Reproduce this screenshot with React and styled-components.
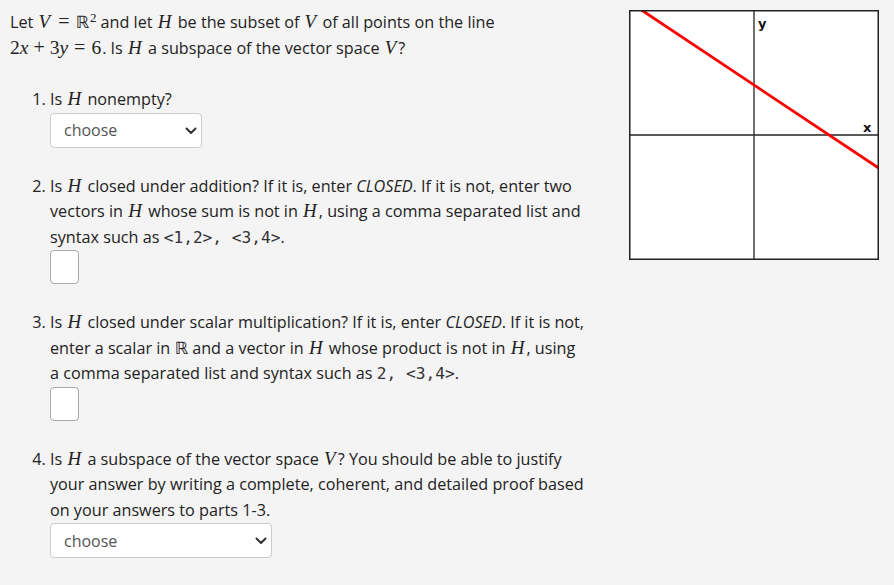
import React from "react";
import styled, { createGlobalStyle } from "styled-components";

const Global = createGlobalStyle`
  html, body { margin: 0; padding: 0; background: #f4f4f4; }
  body { font-family: "Open Sans", "Noto Sans", sans-serif; color: #222; }
`;

const Page = styled.div`
  display: grid;
  grid-template-columns: 590px 250px;
  column-gap: 29px;
  padding: 10px 15px 0 10px;
  align-items: start;
`;

const Column = styled.div`
  font-size: 16.2px;
  line-height: 25.5px;
`;

const Intro = styled.p`
  margin: 0 0 26px 0;
`;

const List = styled.ol`
  margin: 0;
  padding-left: 40px;
`;

const Item = styled.li`
  margin-bottom: 26px;
`;

const M = styled.span`
  font-family: "Liberation Serif", "DejaVu Serif", serif;
  font-style: ${(p) => (p.$up ? "normal" : "italic")};
  font-size: 19px;
  line-height: 1;
  padding: 0 2px 0 1px;
`;

const Eq = styled.span`
  white-space: nowrap;
  font-family: "Liberation Serif", "DejaVu Serif", serif;
  font-size: 19.5px;
  line-height: 1;
  margin-right: 1px;
`;

const Op = styled.span`
  font-family: "Liberation Serif", "DejaVu Serif", serif;
  font-size: 20px;
  line-height: 1;
  margin: 0 ${(p) => p.$gap || 6}px;
`;

const Bb = styled.span`
  font-family: "DejaVu Sans", sans-serif;
  font-size: 17px;
  line-height: 1;
`;

const Sup = styled.sup`
  font-family: "Liberation Serif", serif;
  font-size: 13px;
  line-height: 0;
  margin-left: 1px;
`;

const Code = styled.code`
  font-family: "DejaVu Sans Mono", "Liberation Mono", monospace;
  font-size: 16.2px;
  line-height: 1;
  color: #333;
`;

const SelectWrap = styled.div`
  position: relative;
  width: ${(p) => p.$w}px;
  height: 35px;
`;

const Select = styled.select`
  appearance: none;
  -webkit-appearance: none;
  width: 100%;
  height: 100%;
  box-sizing: border-box;
  background: #fff;
  border: 1px solid #ccc;
  border-radius: 4px;
  padding: 0 13px;
  font-family: "Open Sans", sans-serif;
  font-size: 16px;
  color: #555;
  outline: none;
`;

const Chevron = styled.svg`
  position: absolute;
  right: 5px;
  top: 14px;
  pointer-events: none;
`;

const AnswerBox = styled.input`
  display: block;
  box-sizing: border-box;
  width: 29px;
  height: 34px;
  border: 1px solid #aaa;
  border-radius: 4px;
  background: #fff;
  margin: 0;
  padding: 0;
`;

const Graph = styled.svg`
  display: block;
  background: #fff;
`;

const Dropdown = ({ w }) => (
  <SelectWrap $w={w}>
    <Select defaultValue="">
      <option value="">choose</option>
      <option value="yes">yes</option>
      <option value="no">no</option>
    </Select>
    <Chevron width="12" height="8" viewBox="0 0 12 8">
      <path d="M1.5 1.5 L6 6 L10.5 1.5" fill="none" stroke="#333" strokeWidth="2" strokeLinecap="round" strokeLinejoin="round" />
    </Chevron>
  </SelectWrap>
);

export default function App() {
  return (
    <>
      <Global />
      <Page>
        <Column>
          <Intro>
            Let <M>V</M><Op>=</Op><Bb>ℝ</Bb>
            <Sup>2</Sup> and let <M>H</M> be the subset of <M>V</M> of all points on the line
            <br />
            <Eq>
              2<i>x</i>
              <Op $gap={5}>+</Op>3<i>y</i>
              <Op>=</Op>6
            </Eq>
            . Is <M>H</M> a subspace of the vector space <M>V</M>?
          </Intro>
          <List>
            <Item>
              Is <M>H</M> nonempty?
              <Dropdown w={152} />
            </Item>
            <Item>
              Is <M>H</M> closed under addition? If it is, enter <em>CLOSED</em>. If it is not, enter two
              <br />
              vectors in <M>H</M> whose sum is not in <M>H</M>, using a comma separated list and
              <br />
              syntax such as <Code>&lt;1,2&gt;, &lt;3,4&gt;</Code>.
              <AnswerBox type="text" />
            </Item>
            <Item>
              Is <M>H</M> closed under scalar multiplication? If it is, enter <em>CLOSED</em>. If it is not,
              <br />
              enter a scalar in <Bb>ℝ</Bb> and a vector in <M>H</M> whose product is not in <M>H</M>, using
              <br />
              a comma separated list and syntax such as <Code>2, &lt;3,4&gt;</Code>.
              <AnswerBox type="text" />
            </Item>
            <Item>
              Is <M>H</M> a subspace of the vector space <M>V</M>? You should be able to justify
              <br />
              your answer by writing a complete, coherent, and detailed proof based
              <br />
              on your answers to parts 1-3.
              <Dropdown w={222} />
            </Item>
          </List>
        </Column>
        <Graph width="250" height="250" viewBox="0 0 250 250">
          <line x1="125" y1="0" x2="125" y2="250" stroke="#222" strokeWidth="1.3" />
          <line x1="0" y1="125" x2="250" y2="125" stroke="#222" strokeWidth="1.3" />
          <line x1="12.5" y1="0" x2="250" y2="158.3" stroke="#f00" strokeWidth="2.8" />
          <text x="129" y="18" fontFamily="DejaVu Sans, sans-serif" fontWeight="bold" fontSize="13" fill="#111">y</text>
          <text x="234" y="122" fontFamily="DejaVu Sans, sans-serif" fontWeight="bold" fontSize="13" fill="#111">x</text>
          <rect x="0.75" y="0.75" width="248.5" height="248.5" fill="none" stroke="#222" strokeWidth="1.5" />
        </Graph>
      </Page>
    </>
  );
}
